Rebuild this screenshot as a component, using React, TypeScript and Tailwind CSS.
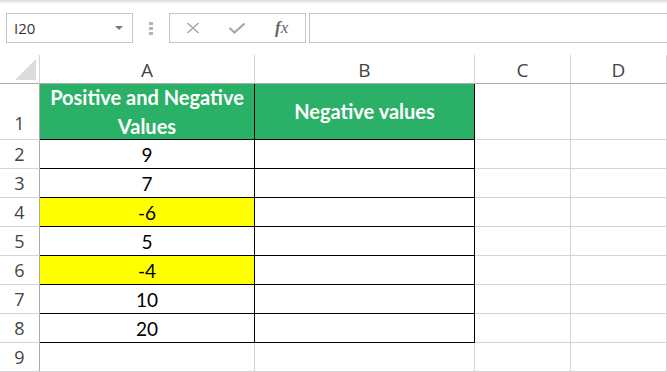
const rows: { n: number; a: string; yellow?: boolean }[] = [
  { n: 2, a: "9" },
  { n: 3, a: "7" },
  { n: 4, a: "-6", yellow: true },
  { n: 5, a: "5" },
  { n: 6, a: "-4", yellow: true },
  { n: 7, a: "10" },
  { n: 8, a: "20" },
];

const cellFont = { fontFamily: "Lato, 'Open Sans', sans-serif" };
const uiFont = { fontFamily: "'Open Sans', 'Noto Sans', sans-serif" };

function RowHead({ n, tall }: { n: number; tall?: boolean }) {
  return (
    <div
      className={`flex justify-center border-r border-b border-r-[#ababab] border-b-[#d4d4d4] text-[18px] text-[#444] ${
        tall ? "h-[56px] items-end pb-[2px]" : "h-[29px] items-center"
      }`}
      style={uiFont}
    >
      {n}
    </div>
  );
}

export default function App() {
  return (
    <div className="h-[372px] w-[667px] overflow-hidden bg-white">
      <div className="h-[4px] bg-gradient-to-b from-[#d9d9d9] to-white" />
      {/* formula bar */}
      <div className="flex h-[51px] items-start pt-[9px]" style={uiFont}>
        <div className="ml-[6px] flex h-[30px] w-[127px] items-center justify-between border border-[#c6c6c6] pl-[7px] pr-[9px]">
          <span className="text-[15px] text-[#333]">I20</span>
          <span className="h-0 w-0 border-x-[4px] border-t-[4px] border-x-transparent border-t-[#777]" />
        </div>
        <div className="ml-[16px] flex h-[30px] flex-col items-center justify-center gap-[2px]">
          <span className="h-[3px] w-[4px] bg-[#b4b4b4]" />
          <span className="h-[3px] w-[4px] bg-[#b4b4b4]" />
          <span className="h-[3px] w-[4px] bg-[#b4b4b4]" />
        </div>
        <div className="ml-[16px] flex h-[30px] w-[137px] items-center border border-[#c6c6c6]">
          <svg width="14" height="12" viewBox="0 0 14 12" className="ml-[16px]">
            <path d="M1.5 1 L12.5 11 M12.5 1 L1.5 11" stroke="#a6a6a6" strokeWidth="1.6" fill="none" />
          </svg>
          <svg width="18" height="12" viewBox="0 0 18 12" className="ml-[28px]">
            <path d="M1.5 6 L6.5 10.5 L16.5 1.5" stroke="#a6a6a6" strokeWidth="2.2" fill="none" />
          </svg>
          <span
            className="ml-[29px] text-[17px] italic text-[#666]"
            style={{ fontFamily: "'Liberation Serif', serif" }}
          >
            <span className="font-bold">f</span>x
          </span>
        </div>
        <div className="ml-[3px] h-[30px] flex-1 border border-r-0 border-[#c6c6c6]" />
      </div>

      {/* sheet */}
      <div className="grid grid-cols-[40px_215px_220px_96px_96px]">
        {/* column headers */}
        <div className="flex h-[29px] items-end justify-end border-r border-b border-r-[#d4d4d4] border-b-[#ababab] pb-[3px] pr-[3px]">
          <svg width="21" height="21" viewBox="0 0 21 21">
            <path d="M21 0 L21 21 L0 21 Z" fill="#dcdcdc" />
          </svg>
        </div>
        {["A", "B", "C", "D"].map((c) => (
          <div
            key={c}
            className="flex h-[29px] items-center justify-center border-r border-b border-r-[#d4d4d4] border-b-[#ababab] pt-[2px] text-[19px] text-[#444]"
            style={uiFont}
          >
            {c}
          </div>
        ))}

        {/* row 1 */}
        <RowHead n={1} tall />
        <div
          className="flex h-[56px] items-center justify-center border-r border-b border-black bg-[#2bb067] text-center text-[20px] font-bold leading-[29px] text-white"
          style={cellFont}
        >
          Positive and Negative
          <br />
          Values
        </div>
        <div
          className="flex h-[56px] items-center justify-center border-r border-b border-black bg-[#2bb067] pb-[2px] text-[20px] font-bold text-white"
          style={cellFont}
        >
          Negative values
        </div>
        <div className="h-[56px] border-r border-b border-[#d4d4d4]" />
        <div className="h-[56px] border-r border-b border-[#d4d4d4]" />

        {rows.map((r) => (
          <div key={r.n} className="contents">
            <RowHead n={r.n} />
            <div
              className={`flex h-[29px] items-center justify-center border-r border-b border-black pt-[2px] text-[19px] text-black ${
                r.yellow ? "bg-[#ffff00]" : ""
              }`}
              style={cellFont}
            >
              {r.a}
            </div>
            <div className="h-[29px] border-r border-b border-black" />
            <div className="h-[29px] border-r border-b border-[#d4d4d4]" />
            <div className="h-[29px] border-r border-b border-[#d4d4d4]" />
          </div>
        ))}

        {/* row 9 */}
        <RowHead n={9} />
        <div className="h-[29px] border-r border-b border-[#d4d4d4]" />
        <div className="h-[29px] border-r border-b border-[#d4d4d4]" />
        <div className="h-[29px] border-r border-b border-[#d4d4d4]" />
        <div className="h-[29px] border-r border-b border-[#d4d4d4]" />
      </div>
    </div>
  );
}
